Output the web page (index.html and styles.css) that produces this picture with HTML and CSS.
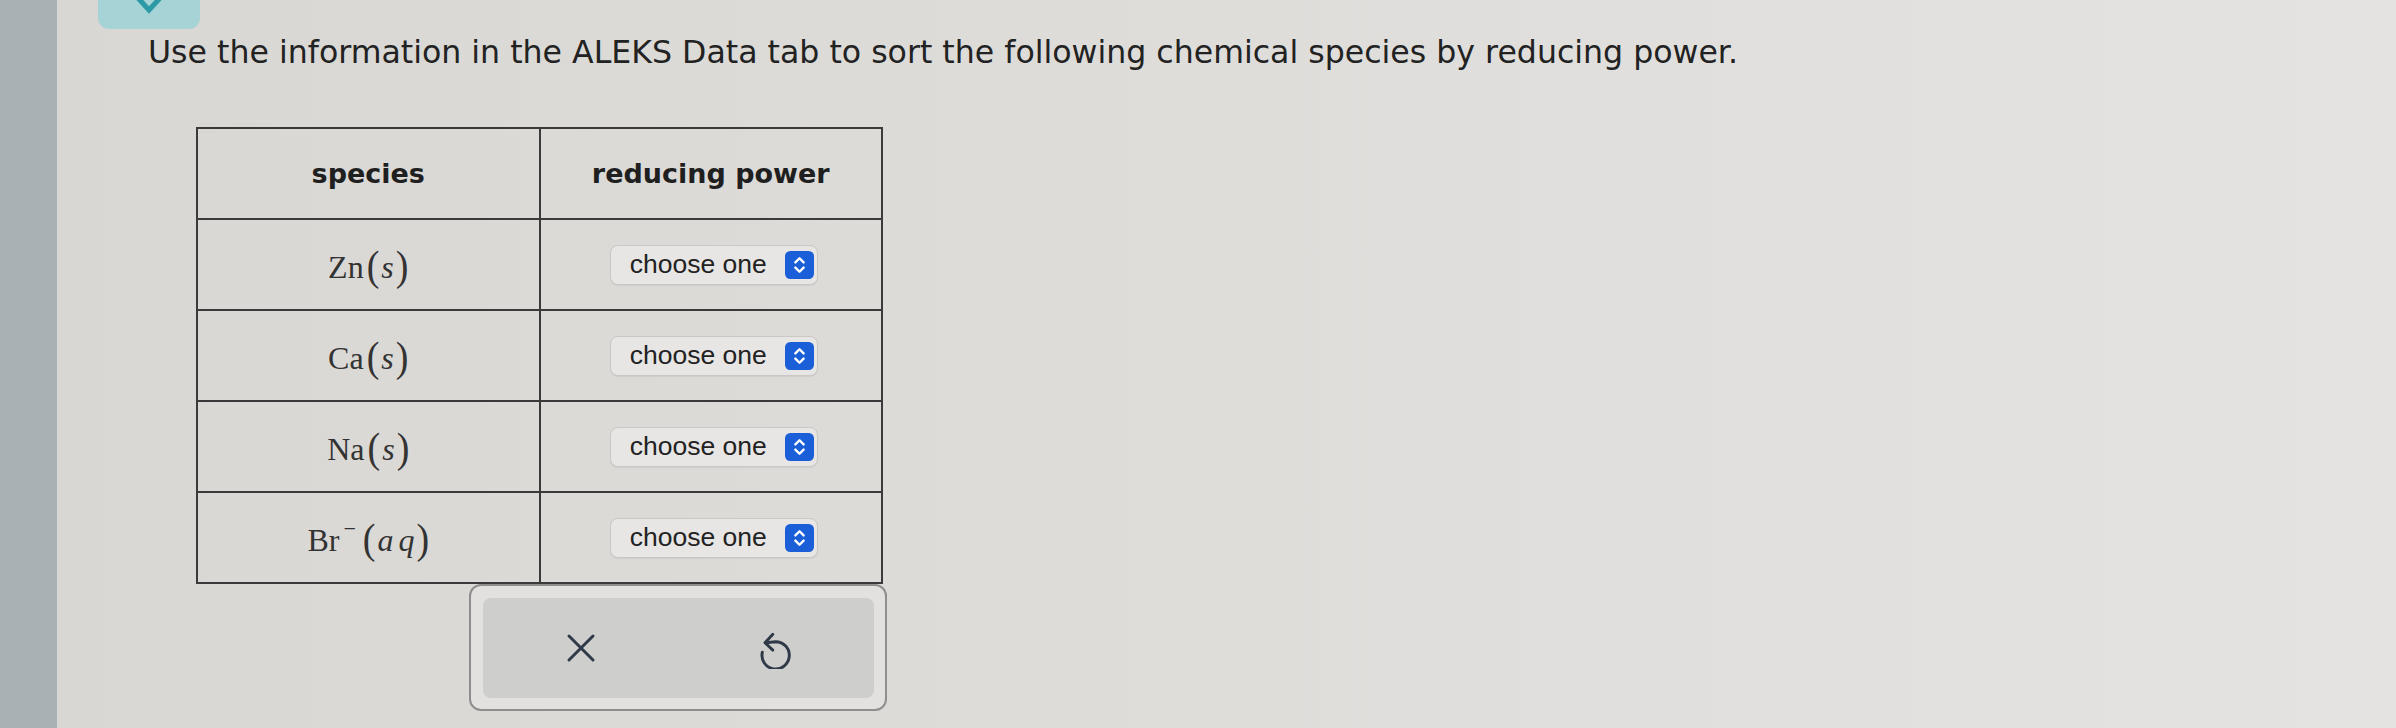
FILE: index.html
```html
<!DOCTYPE html>
<html lang="en">
<head>
<meta charset="utf-8">
<title>ALEKS reducing power</title>
<link rel="stylesheet" href="styles.css">
</head>
<body>
<div class="page">
  <div class="strip"></div>
  <div class="main">
    <div class="tab">
      <svg class="tab-chevron" width="26" height="14" viewBox="0 0 26 14"><path d="M2 -2 L13 10 L24 -2" fill="none" stroke="#2b9aa6" stroke-width="5" stroke-linejoin="miter"/></svg>
    </div>
    <p class="prompt">Use the information in the ALEKS Data tab to sort the following chemical species by reducing power.</p>
    <table class="grid">
      <tr class="head">
        <th>species</th>
        <th>reducing power</th>
      </tr>
      <tr>
        <td class="sp"><span class="el">Zn</span><span class="par">(</span><i>s</i><span class="par">)</span></td>
        <td><div class="pick"><span>choose one</span><svg class="step" width="29" height="28" viewBox="0 0 28 27"><rect width="28" height="27" rx="5" fill="#1a5fd7"/><path d="M10 11 L14 7 L18 11 M10 16 L14 20 L18 16" fill="none" stroke="#fff" stroke-width="2.3" stroke-linecap="round" stroke-linejoin="round"/></svg></div></td>
      </tr>
      <tr>
        <td class="sp"><span class="el">Ca</span><span class="par">(</span><i>s</i><span class="par">)</span></td>
        <td><div class="pick"><span>choose one</span><svg class="step" width="29" height="28" viewBox="0 0 28 27"><rect width="28" height="27" rx="5" fill="#1a5fd7"/><path d="M10 11 L14 7 L18 11 M10 16 L14 20 L18 16" fill="none" stroke="#fff" stroke-width="2.3" stroke-linecap="round" stroke-linejoin="round"/></svg></div></td>
      </tr>
      <tr>
        <td class="sp"><span class="el">Na</span><span class="par">(</span><i>s</i><span class="par">)</span></td>
        <td><div class="pick"><span>choose one</span><svg class="step" width="29" height="28" viewBox="0 0 28 27"><rect width="28" height="27" rx="5" fill="#1a5fd7"/><path d="M10 11 L14 7 L18 11 M10 16 L14 20 L18 16" fill="none" stroke="#fff" stroke-width="2.3" stroke-linecap="round" stroke-linejoin="round"/></svg></div></td>
      </tr>
      <tr>
        <td class="sp"><span class="el">Br</span><sup class="chg">&#8722;</sup><span class="par">(</span><i>a</i><i class="q">q</i><span class="par">)</span></td>
        <td><div class="pick"><span>choose one</span><svg class="step" width="29" height="28" viewBox="0 0 28 27"><rect width="28" height="27" rx="5" fill="#1a5fd7"/><path d="M10 11 L14 7 L18 11 M10 16 L14 20 L18 16" fill="none" stroke="#fff" stroke-width="2.3" stroke-linecap="round" stroke-linejoin="round"/></svg></div></td>
      </tr>
    </table>
    <div class="panel">
      <div class="panel-inner">
        <button class="act" aria-label="clear">
          <svg width="30" height="30" viewBox="0 0 30 30"><path d="M3 3 L27 27 M27 3 L3 27" stroke="#2f3947" stroke-width="3" stroke-linecap="round"/></svg>
        </button>
        <button class="act" aria-label="reset">
          <svg width="42" height="42" viewBox="12 8 40 40"><path d="M19 32 A13 13 0 1 0 31.7 22 L22 23" fill="none" stroke="#2f3947" stroke-width="2.8" stroke-linecap="round" stroke-linejoin="round"/><path d="M29 15 L21.5 23 L29 30" fill="none" stroke="#2f3947" stroke-width="2.8" stroke-linecap="round" stroke-linejoin="round"/></svg>
        </button>
      </div>
    </div>
  </div>
</div>
</body>
</html>
```

FILE: styles.css
```css
html, body {
  margin: 0;
  padding: 0;
}
body {
  width: 2396px;
  height: 728px;
  overflow: hidden;
  background: linear-gradient(90deg, #d9d7d4 0%, #dddbd8 35%, #e4e3e1 100%);
  font-family: "DejaVu Sans", Verdana, sans-serif;
  color: #2b2b2b;
}
.page {
  display: flex;
  height: 728px;
}
.strip {
  width: 57px;
  flex: none;
  background: #a8b2b5;
}
.main {
  flex: 1;
}
.tab {
  margin-left: 41px;
  width: 102px;
  height: 29px;
  background: #a6d3d5;
  border-radius: 0 0 11px 11px;
  display: flex;
  justify-content: center;
  align-items: flex-start;
}
.tab-chevron {
  display: block;
}
.prompt {
  margin: 4px 0 0 91px;
  font-size: 31.6px;
  line-height: 38px;
  color: #222;
  white-space: nowrap;
}
.grid {
  margin: 56px 0 0 139px;
  border-collapse: collapse;
  width: 687px;
  table-layout: fixed;
  border: 2px solid #2e2e2e;
}
.grid th, .grid td {
  border: 2px solid #3a3a3a;
  height: 89px;
  padding: 0;
  text-align: center;
  vertical-align: middle;
}
.grid th {
  font-weight: bold;
  font-size: 27px;
  color: #1f1f1f;
}
.sp {
  font-family: "Liberation Serif", "Times New Roman", serif;
  font-size: 32px;
  color: #333;
}
.sp .el {
  margin-right: 3px;
}
.sp .par {
  font-size: 38px;
  display: inline-block;
  transform: scaleY(1.12);
}
.sp i {
  margin: 0 2px;
}
.sp .q {
  margin-left: 3px;
}
.chg {
  font-size: 22px;
  vertical-align: 15px;
  line-height: 0;
  margin: 0 7px 0 1px;
}
.pick {
  margin: 0 auto;
  width: 208px;
  height: 40px;
  box-sizing: border-box;
  border: 1.5px solid #c9c8c6;
  border-radius: 8px;
  background: #e7e6e4;
  box-shadow: 0 1px 1px rgba(0,0,0,0.06);
  display: flex;
  align-items: center;
  justify-content: space-between;
  padding: 0 3px 0 19px;
  font-family: "Liberation Sans", Arial, sans-serif;
  font-size: 26.5px;
  color: #222;
  position: relative;
  left: 3px;
}
.step {
  display: block;
}
.panel {
  margin-left: 412px;
  width: 418px;
  height: 127px;
  box-sizing: border-box;
  border: 2px solid #8e8e8e;
  border-radius: 12px;
  background: #e2e1df;
  padding: 12px 11px 11px 12px;
}
.panel-inner {
  height: 100%;
  background: #cecfcd;
  border-radius: 8px;
  display: flex;
}
.act {
  flex: 1;
  border: 0;
  background: transparent;
  display: flex;
  align-items: center;
  justify-content: center;
  padding: 0;
}
.act svg {
  display: block;
}
```
